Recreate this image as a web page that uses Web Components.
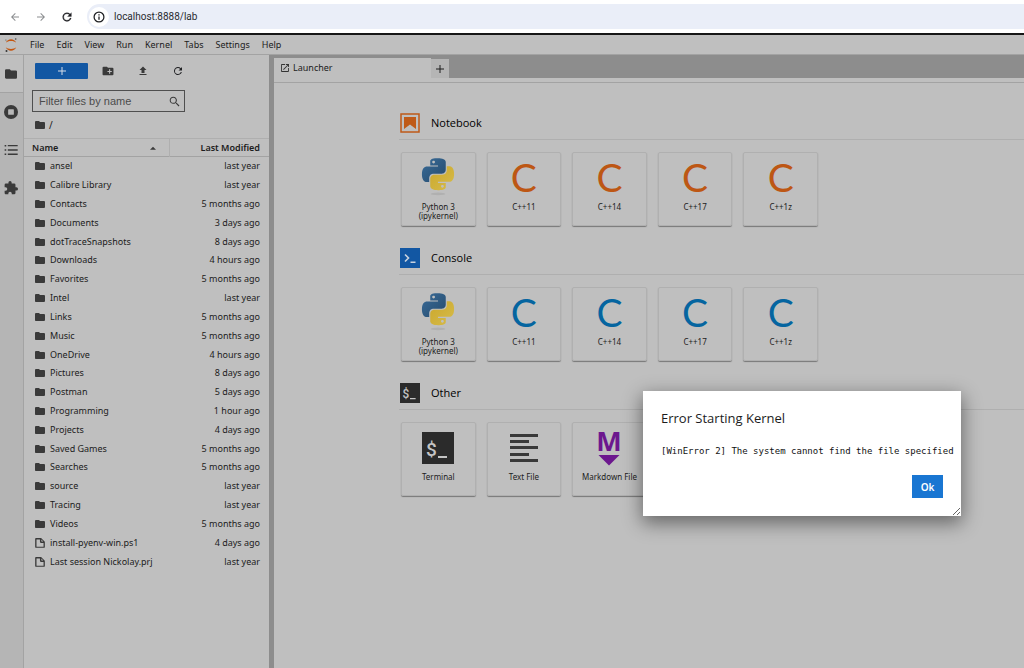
<!DOCTYPE html>
<html lang="en">
<head>
<meta charset="utf-8">
<title>JupyterLab</title>
<style>
html, body { margin: 0; height: 100%; }
body { font-family: "Noto Sans", "Open Sans", sans-serif; font-size: 9px; line-height: 14px; color: #1c1c1c; background: #bfbfbf; overflow: hidden; }
</style>
</head>
<body>
<lab-app></lab-app>
<script>
const PY1 = 'M14.25.18l.9.2.73.26.59.3.45.32.34.34.25.34.16.33.1.3.04.26.02.2-.01.13V8.5l-.05.63-.13.55-.21.46-.26.38-.3.31-.33.25-.35.19-.35.14-.33.1-.3.07-.26.04-.21.02H8.77l-.69.05-.59.14-.5.22-.41.27-.33.32-.27.35-.2.36-.15.37-.1.35-.07.32-.04.27-.02.21v3.06H3.17l-.21-.03-.28-.07-.32-.12-.35-.18-.36-.26-.36-.36-.35-.46-.32-.59-.28-.73-.21-.88-.14-1.05-.05-1.23.06-1.22.16-1.04.24-.87.32-.71.36-.57.4-.44.42-.33.42-.24.4-.16.36-.1.32-.05.24-.01h.16l.06.01h8.16v-.83H6.18l-.01-2.75-.02-.37.05-.34.11-.31.17-.28.25-.26.31-.23.38-.2.44-.18.51-.15.58-.12.64-.1.71-.06.77-.04.84-.02 1.27.05zm-6.3 1.98l-.23.33-.08.41.08.41.23.34.33.22.41.09.41-.09.33-.22.23-.34.08-.41-.08-.41-.23-.33-.33-.22-.41-.09-.41.09z';
const PY2 = 'M21.04 6.11l.28.06.32.12.35.18.36.27.36.35.35.47.32.59.28.73.21.88.14 1.04.05 1.23-.06 1.23-.16 1.04-.24.86-.32.71-.36.57-.4.45-.42.33-.42.24-.4.16-.36.09-.32.05-.24.02-.16-.01h-8.22v.82h5.84l.01 2.76.02.36-.05.34-.11.31-.17.29-.25.25-.31.24-.38.2-.44.17-.51.15-.58.13-.64.09-.71.07-.77.04-.84.01-1.27-.04-1.07-.14-.9-.2-.73-.25-.59-.3-.45-.33-.34-.34-.25-.34-.16-.33-.1-.3-.04-.25-.02-.2.01-.13v-5.34l.05-.64.13-.54.21-.46.26-.38.3-.32.33-.24.35-.2.35-.14.33-.1.3-.06.26-.04.21-.02.13-.01h5.84l.69-.05.59-.14.5-.21.41-.28.33-.32.27-.35.2-.36.15-.36.1-.35.07-.32.04-.28.02-.21V6.07h2.09l.14.01zm-6.47 14.25l-.23.33-.08.41.08.41.23.33.33.23.41.08.41-.08.33-.23.23-.33.08-.41-.08-.41-.23-.33-.33-.23-.41-.08-.41.08z';
const ICONS = {
  back: ['0 0 24 24', '<path fill="#8b8d90" d="M20 11H7.8l5.6-5.6L12 4l-8 8 8 8 1.4-1.4L7.8 13H20z"/>'],
  forward: ['0 0 24 24', '<path fill="#8b8d90" d="M4 11h12.2l-5.6-5.6L12 4l8 8-8 8-1.4-1.4 5.6-5.6H4z"/>'],
  reload: ['0 0 24 24', '<path fill="#202124" d="M17.65 6.35A8 8 0 1 0 19.73 14h-2.08A6 6 0 1 1 12 6c1.66 0 3.14.69 4.22 1.78L13 11h7V4z"/>'],
  reloadbold: ['1 1 22 22', '<path fill="#202124" stroke="#202124" stroke-width=".5" d="M17.65 6.35A8 8 0 1 0 19.73 14h-2.08A6 6 0 1 1 12 6c1.66 0 3.14.69 4.22 1.78L13 11h7V4z"/>'],
  info: ['1 1 22 22', '<circle cx="12" cy="12" r="9" fill="none" stroke="#1f2023" stroke-width="2.3"/><path fill="#1f2023" d="M10.8 11h2.4v6h-2.4zM10.8 7h2.4v2.4h-2.4z"/>'],
  jupyter: ['0 0 12 14', '<path fill="#c4560f" d="M.8 4.8C1.7 2.6 3.7 1.3 6 1.3s4.3 1.3 5.2 3.5C10 3.7 8.2 3.1 6 3.1S2 3.7.8 4.8zM.8 9.2C1.7 11.4 3.7 12.7 6 12.7s4.3-1.3 5.2-3.5C10 10.3 8.2 10.9 6 10.9S2 10.3.8 9.2z"/><circle cx="10.7" cy="1" r=".8" fill="#444"/><circle cx="1.5" cy="13" r="1" fill="#333"/><circle cx=".9" cy="2" r=".6" fill="#555"/>'],
  folder: ['2 4 20 16', '<path fill="#3a3a3a" d="M10 4H4a2 2 0 0 0-2 2v12c0 1.1.9 2 2 2h16a2 2 0 0 0 2-2V8a2 2 0 0 0-2-2h-8z"/>'],
  newfolder: ['1 1 22 22', '<path fill="#3a3a3a" d="M20 6h-8l-2-2H4a2 2 0 0 0-2 2v12c0 1.1.9 2 2 2h16a2 2 0 0 0 2-2V8a2 2 0 0 0-2-2zm-1 8h-3v3h-2v-3h-3v-2h3V9h2v3h3z"/>'],
  upload: ['0 0 24 24', '<path fill="#3a3a3a" d="M9 16h6v-6h4l-7-7-7 7h4zM5 18h14v2H5z"/>'],
  search: ['1 1 16 16', '<path fill="#3a3a3a" d="M12.1 10.9h-.7l-.2-.2c.8-.9 1.3-2.2 1.3-3.5C12.5 4.2 10.2 2 7.2 2S2 4.2 2 7.2s2.3 5.2 5.2 5.2c1.3 0 2.5-.5 3.5-1.3l.2.2v.7l4.1 4.1 1.2-1.2zm-4.9 0a3.7 3.7 0 1 1 0-7.4 3.7 3.7 0 0 1 0 7.4z"/>'],
  file: ['2 2 18 18', '<path fill="#3a3a3a" d="M19.3 8.2l-5.5-5.5c-.3-.3-.7-.5-1.2-.5H3.9c-.8.1-1.6.9-1.6 1.8v14.1c0 .9.7 1.6 1.6 1.6h14.2c.9 0 1.6-.7 1.6-1.6V9.4c.1-.5-.1-.9-.4-1.2zm-5.8-3.3l3.4 3.6h-3.4zm3.9 12.7H4.7V4.7h6.2v4.7c0 .9.8 1.6 1.7 1.6h4.8z"/>'],
  running: ['1 1 22 22', '<circle cx="12" cy="12" r="11" fill="#3a3a3a"/><rect x="7.5" y="7.5" width="9" height="9" rx="1" fill="#b8b8b8"/>'],
  toc: ['1 1 22 22', '<path fill="#3a3a3a" d="M2 4h2.5v2.500H2zM2 10.8h2.5v2.400H2zM2 17.5h2.5V20H2zM7 4h15.5v2.2H7zM7 10.9h15.5v2.2H7zM7 17.6h15.5v2.2H7z"/>'],
  puzzle: ['1 1 22 22', '<path fill="#3a3a3a" d="M20.5 11H19V7a2 2 0 0 0-2-2h-4V3.5a2.5 2.5 0 0 0-5 0V5H4a2 2 0 0 0-2 2v3.8h1.5a2.7 2.7 0 0 1 0 5.400H2V20c0 1.1.9 2 2 2h3.8v-1.5a2.7 2.7 0 0 1 5.4 0V22H17a2 2 0 0 0 2-2v-4h1.5a2.5 2.5 0 0 0 0-5z"/>'],
  plus: ['0 0 8 8', '<path stroke="currentColor" d="M4 0v8M0 4h8"/>'],
  launcher: ['3 3 18 18', '<path fill="#333" d="M19 19H5V5h7V3H5a2 2 0 0 0-2 2v14a2 2 0 0 0 2 2h14c1.1 0 2-.9 2-2v-7h-2zM14 3v2h3.59l-9.83 9.83 1.41 1.41L19 6.41V10h2V3z"/>'],
  caret: ['0 0 10 6', '<path fill="#3a3a3a" d="M0 6l5-5 5 5z"/>'],
  notebook: ['0 0 20 20', '<rect x="1" y="1" width="18" height="18" fill="none" stroke="#bf5a18" stroke-width="1.5"/><path fill="#bf5a18" d="M4 4h12v12l-6-4.5L4 16z"/>'],
  console: ['0 0 20 20', '<path fill="#1257a3" d="M0 0h20v20H0z"/><path fill="none" stroke="#c9d3df" stroke-width="1.6" d="M5 6.5l3.500 3.500L5 13.500M10.500 14.200h5"/>'],
  terminal: ['0 0 32 32', '<path fill="#2b2b2b" d="M0 0h32v32H0z"/><text x="4" y="24" font-family="Roboto, sans-serif" font-size="19" font-weight="500" fill="#c4c4c4">$</text><path fill="#c4c4c4" d="M16 24h9v2h-9z"/>'],
  text: ['0 0 30 30', '<path fill="#393939" d="M1 1h28v3H1zM1 7h19v3H1zM1 13h28v3H1zM1 20h19v3H1zM1 26h28v3H1z"/>'],
  markdown: ['0 0 32 36', '<text x="16" y="21" text-anchor="middle" font-family="Open Sans, sans-serif" font-size="27" font-weight="700" fill="#6c178e">M</text><path fill="#6c178e" d="M5.5 25h21L16 35.5z"/>'],
  python: ['0 0 24 29', `<defs><linearGradient id="b" x2="1" y2="1"><stop stop-color="#3a6c99"/><stop offset="1" stop-color="#254a6c"/></linearGradient><linearGradient id="y" x2="1" y2="1"><stop stop-color="#cba72a"/><stop offset="1" stop-color="#d6bc4c"/></linearGradient></defs><ellipse cx="12" cy="26.8" rx="5.5" ry="1" fill="#b0b0b0"/><path fill="url(#b)" d="${PY1}"/><path fill="url(#y)" d="${PY2}"/>`]
};

function define(name, css, html, setup) {
  const t = document.createElement('template');
  t.innerHTML = `<style>*{box-sizing:border-box}${css}</style>${html}`;
  customElements.define(name, class extends HTMLElement {
    connectedCallback() {
      if (this.shadowRoot) return;
      this.attachShadow({ mode: 'open' }).append(t.content.cloneNode(true));
      if (setup) setup(this, this.shadowRoot);
    }
  });
}
const BTN = 'button{appearance:none;border:0;padding:0;margin:0;background:none;font:inherit;color:inherit;display:flex;align-items:center;justify-content:center}';

define('lab-icon', ':host{display:block;flex:none}svg{display:block;width:100%;height:100%;overflow:visible}', '', (el, root) => {
  const [box, body] = ICONS[el.getAttribute('name')];
  root.innerHTML += `<svg viewBox="${box}" aria-hidden="true">${body}</svg>`;
});

define('browser-bar', `:host{display:flex;align-items:center;height:35px;background:#fff;border-bottom:2px solid #161616;padding-left:9px;flex:none}
${BTN} nav{display:flex;gap:14px}lab-icon{width:12px;height:12px}
.address{flex:1;height:25px;margin-left:14px;background:#eaeef8;border-radius:13px 0 0 13px;display:flex;align-items:center;padding-left:2px}
.badge{width:20px;height:20px;border-radius:10px;background:#fff}
.address lab-icon{width:12px;height:12px}
input{flex:1;min-width:0;border:0;background:none;padding:0;margin-left:5px;font:10px Roboto,sans-serif;color:#2a2c30;outline:0}`,
`<nav><button aria-label="Back"><lab-icon name="back"></lab-icon></button><button aria-label="Forward"><lab-icon name="forward"></lab-icon></button><button aria-label="Reload"><lab-icon name="reloadbold"></lab-icon></button></nav>
<div class="address"><button class="badge" aria-label="Site information"><lab-icon name="info"></lab-icon></button><input aria-label="Address" value="localhost:8888/lab"></div>`);

define('menu-bar', `:host{display:flex;align-items:center;height:20px;border-bottom:1px solid #a3a3a3;padding-left:5px;flex:none}
${BTN} lab-icon{width:12px;height:14px;margin-right:13px}nav{display:flex;gap:12px}`,
`<lab-icon name="jupyter"></lab-icon><nav><button>File</button><button>Edit</button><button>View</button><button>Run</button><button>Kernel</button><button>Tabs</button><button>Settings</button><button>Help</button></nav>`);

define('side-bar', `:host{display:flex;flex-direction:column;box-sizing:border-box;width:24px;flex:none;background:#b5b5b5;border-right:1px solid #a3a3a3}
${BTN} button{height:38px;width:100%;padding-right:1px}button.on{background:#bfbfbf;border-bottom:1px solid #a3a3a3}lab-icon{width:14px;height:14px}.on lab-icon{width:12px;height:10px}`,
`<button class="on" aria-label="File browser"><lab-icon name="folder"></lab-icon></button><button aria-label="Running"><lab-icon name="running"></lab-icon></button><button aria-label="Table of contents"><lab-icon name="toc"></lab-icon></button><button aria-label="Extensions"><lab-icon name="puzzle"></lab-icon></button>`);

const FILES = [['ansel','last year'],['Calibre Library','last year'],['Contacts','5 months ago'],['Documents','3 days ago'],['dotTraceSnapshots','8 days ago'],['Downloads','4 hours ago'],['Favorites','5 months ago'],['Intel','last year'],['Links','5 months ago'],['Music','5 months ago'],['OneDrive','4 hours ago'],['Pictures','8 days ago'],['Postman','5 days ago'],['Programming','1 hour ago'],['Projects','4 days ago'],['Saved Games','5 months ago'],['Searches','5 months ago'],['source','last year'],['Tracing','last year'],['Videos','5 months ago'],['install-pyenv-win.ps1','4 days ago'],['Last session Nickolay.prj','last year']];

define('file-browser', `:host{display:flex;flex-direction:column;width:245px;flex:none}
${BTN} .tools{display:flex;align-items:center;padding:8px 0 0 11px;height:24px}
.new{width:53px;height:16px;background:#1257a3;color:#d5dde8;border-radius:1px;margin-right:13px}.new lab-icon{width:8px;height:8px}
.tools .t{width:14px;height:14px;margin-right:21px}.t lab-icon{width:12px;height:12px}
.filter{display:flex;align-items:center;width:153px;height:22px;margin:11px 0 0 8px;border:1px solid #4f4f4f;padding:0 4px 0 6px}
input{flex:1;min-width:0;border:0;background:none;padding:0;outline:0;font:11px "Liberation Sans",sans-serif;color:#222}input::placeholder{color:#4c4c4c;opacity:1}.filter lab-icon{width:11px;height:11px}
.path{display:flex;align-items:center;gap:4px;height:26px;padding-left:11px;font-size:10px}
.fi{width:10px;height:8px}
table{border-collapse:collapse;table-layout:fixed;width:100%}
.head{border-top:1px solid #afafaf;border-bottom:1px solid #a3a3a3;height:19px}
th{font-weight:600;text-align:left;padding:0 0 0 8px;height:17px}th+th,td+td{text-align:right;padding:0 9px 0 0}th+th{border-left:1px solid #afafaf}
th>div{display:flex;justify-content:space-between;align-items:center;padding-right:13px}th lab-icon{width:6px;height:4px}
.rows{height:414px}td{padding:0 0 0 11px;white-space:nowrap}td>div{display:flex;align-items:center;gap:5px}
.f{width:10px;height:10px}`,
`<div class="tools"><button class="new" aria-label="New launcher"><lab-icon name="plus"></lab-icon></button><button class="t" aria-label="New folder"><lab-icon name="newfolder"></lab-icon></button><button class="t" aria-label="Upload"><lab-icon name="upload"></lab-icon></button><button class="t" aria-label="Refresh"><lab-icon name="reload"></lab-icon></button></div>
<label class="filter"><input placeholder="Filter files by name" aria-label="Filter files by name"><lab-icon name="search"></lab-icon></label>
<div class="path"><lab-icon class="fi" name="folder"></lab-icon><span>/</span></div>
<table class="head"><colgroup><col style="width:145px"><col></colgroup><thead><tr><th><div>Name<lab-icon name="caret"></lab-icon></div></th><th>Last Modified</th></tr></thead></table>
<table class="rows"><colgroup><col style="width:145px"><col></colgroup><tbody>${FILES.map(([n, d], i) => `<tr><td><div><lab-icon class="${i > 19 ? 'f' : 'fi'}" name="${i > 19 ? 'file' : 'folder'}"></lab-icon>${n}</div></td><td>${d}</td></tr>`).join('')}</tbody></table>`);

define('tab-strip', `:host{display:flex;align-items:flex-end;height:23px;background:#8d8d8d;flex:none}
${BTN} .tab{width:157px;height:20px;background:#bfbfbf;justify-content:flex-start;padding-left:7px;gap:4px}.tab lab-icon{width:8px;height:8px}
.add{width:18px;height:19px;background:#b5b5b5}.add lab-icon{width:8px;height:8px}`,
`<button class="tab"><lab-icon name="launcher"></lab-icon>Launcher</button><button class="add" aria-label="New tab"><lab-icon name="plus"></lab-icon></button>`);

define('launch-card', `:host{display:block;min-width:0}
${BTN} button{width:100%;height:74px;border:1px solid #b0b0b0;border-radius:2px;box-shadow:0 1px 1px #777;flex-direction:column;justify-content:flex-start;font-size:8px;line-height:9px}
.pic{height:49px;display:flex;align-items:center;justify-content:center;flex:none}.letter{font-family:Lato,sans-serif;font-size:39px;line-height:47px;color:var(--tint)}
.big{width:32px;height:32px}.python{height:39px}.text{width:30px;height:30px}.markdown{height:36px}`,
`<button><span class="pic"></span><span class="label"><slot></slot></span></button>`, (el, root) => {
  const icon = el.getAttribute('icon');
  const pic = root.querySelector('.pic');
  if (icon) pic.innerHTML = `<lab-icon class="big ${icon}" name="${icon}"></lab-icon>`;
  else { pic.textContent = 'C'; pic.classList.add('letter'); }
});

define('launch-section', `:host{display:block;height:135px}
header{display:flex;align-items:center;gap:11px;height:27px;padding:0 0 7px 1px;border-bottom:1px solid #afafaf}
h2{margin:0;font:400 11px/18px "Open Sans",sans-serif;color:#000}lab-icon{width:20px;height:20px}
.cards{display:grid;grid-template-columns:repeat(5,1fr);gap:11px;max-width:419px;padding:12px 0 0 2px}`,
`<header></header><div class="cards"><slot></slot></div>`, (el, root) => {
  root.querySelector('header').innerHTML = `<lab-icon name="${el.getAttribute('icon')}"></lab-icon><h2>${el.getAttribute('heading')}</h2>`;
});

define('launcher-panel', `:host{display:flex;flex-direction:column;flex:1;min-width:0}
.bar{height:5px;border-bottom:1px solid #a3a3a3}
main{padding:30px 0 0 125px}`,
`<tab-strip></tab-strip><div class="bar"></div><main>
<launch-section icon="notebook" heading="Notebook" style="--tint:#bd5714"><launch-card icon="python">Python 3<br>(ipykernel)</launch-card><launch-card>C++11</launch-card><launch-card>C++14</launch-card><launch-card>C++17</launch-card><launch-card>C++1z</launch-card></launch-section>
<launch-section icon="console" heading="Console" style="--tint:#0565a0"><launch-card icon="python">Python 3<br>(ipykernel)</launch-card><launch-card>C++11</launch-card><launch-card>C++14</launch-card><launch-card>C++17</launch-card><launch-card>C++1z</launch-card></launch-section>
<launch-section icon="terminal" heading="Other"><launch-card icon="terminal">Terminal</launch-card><launch-card icon="text">Text File</launch-card><launch-card icon="markdown">Markdown File</launch-card></launch-section>
</main>`);

define('error-dialog', `:host{display:block;position:absolute;left:643px;top:391px;width:318px}
${BTN} dialog{position:relative;display:flex;flex-direction:column;width:100%;height:125px;margin:0;border:0;padding:18px;background:#fff;color:#1c1c1c;box-shadow:0 6px 18px 1px #0007;resize:both;overflow:hidden}
h1{margin:0;font:400 13px/18px "Open Sans",sans-serif}pre{margin:17px 0 0;font:9px/14px "DejaVu Sans Mono",monospace;color:#111}
button{width:31px;height:23px;background:#1976d2;color:#fff;font-size:10px;font-weight:600;margin:17px 0 0 auto}`,
`<dialog open aria-labelledby="t"><h1 id="t">Error Starting Kernel</h1><pre>[WinError 2] The system cannot find the file specified</pre><button>Ok</button></dialog>`);

define('lab-app', `:host{display:flex;flex-direction:column;height:100%;background:#bfbfbf}
.work{display:flex;flex:1;min-height:0}.split{width:5px;background:#8d8d8d;flex:none}`,
`<browser-bar></browser-bar><menu-bar></menu-bar><div class="work"><side-bar></side-bar><file-browser></file-browser><div class="split"></div><launcher-panel></launcher-panel></div><error-dialog></error-dialog>`);
</script>
</body>
</html>
